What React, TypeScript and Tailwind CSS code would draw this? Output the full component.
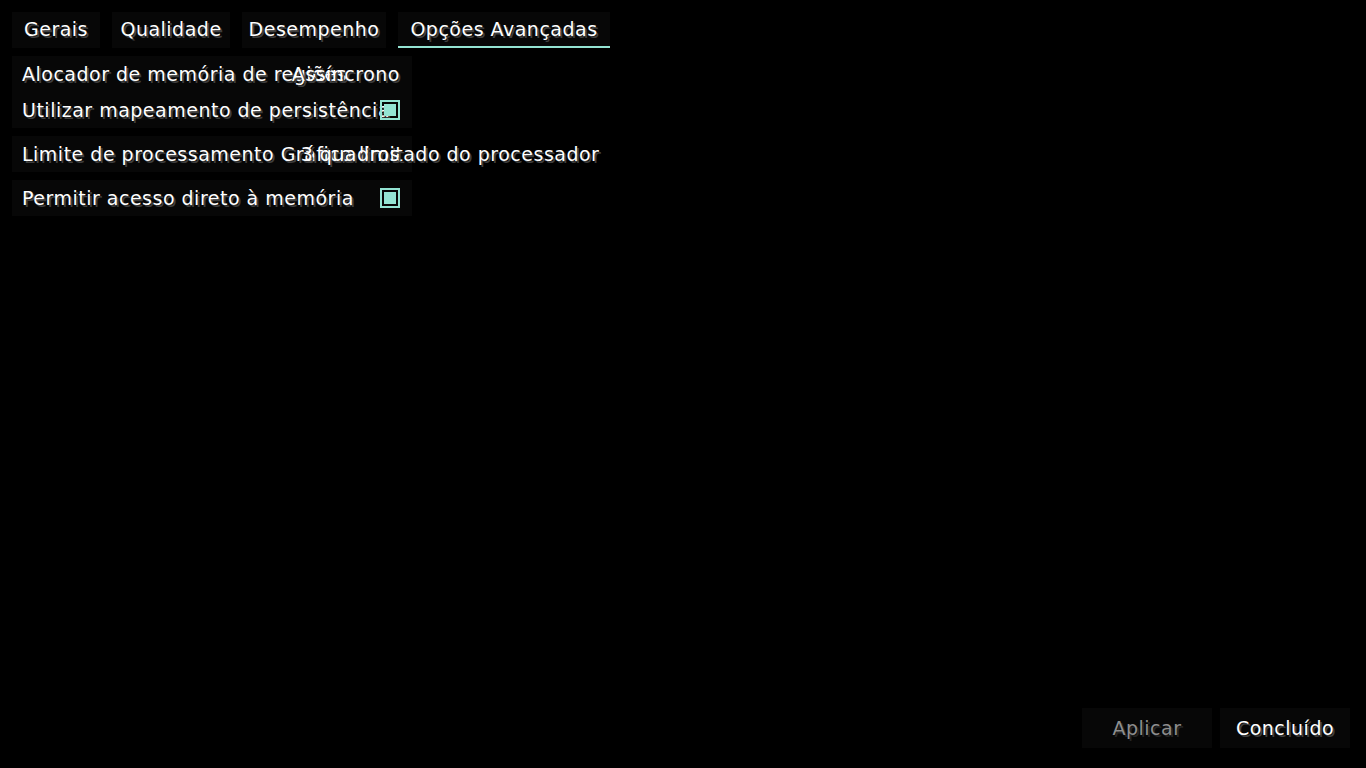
import React from "react";

const FONT = "font-['DejaVu_Sans',sans-serif] text-[19px] leading-none tracking-[0.5px]";
const SHADOW = "[text-shadow:2px_2px_0_#3f3f3f]";
const PANEL = "bg-[#070707]";

function Tab({ label, w, active }: { label: string; w: string; active?: boolean }) {
  return (
    <div className={`${w} h-[36px] ${PANEL} flex flex-col`}>
      <div className={`flex-1 flex items-center justify-center text-white ${SHADOW}`}>{label}</div>
      <div className={`h-[2px] ${active ? "bg-[#94e4d3]" : "bg-transparent"}`} />
    </div>
  );
}

function Check() {
  return (
    <div className="w-[20px] h-[20px] border-2 border-[#94e4d3] p-[2px] shrink-0">
      <div className="w-full h-full bg-[#94e4d3]" />
    </div>
  );
}

function Row({ label, value, check, extra }: { label: string; value?: string; check?: boolean; extra?: string }) {
  return (
    <div
      className={`w-[400px] h-[36px] ${PANEL} grid grid-cols-[minmax(0,1fr)] items-center pl-[10px] pr-[12px] ${extra ?? ""}`}
    >
      <span className={`[grid-area:1/1] justify-self-start min-w-0 whitespace-nowrap text-white ${SHADOW}`}>
        {label}
      </span>
      {value && (
        <span className={`[grid-area:1/1] justify-self-end whitespace-nowrap text-white ${SHADOW}`}>{value}</span>
      )}
      {check && (
        <div className="[grid-area:1/1] justify-self-end">
          <Check />
        </div>
      )}
    </div>
  );
}

export default function App() {
  return (
    <div className={`w-[1366px] h-[768px] bg-black flex flex-col overflow-hidden ${FONT}`}>
      <div className="flex gap-[12px] pl-[12px] pt-[12px]">
        <Tab label="Gerais" w="w-[88px]" />
        <Tab label="Qualidade" w="w-[118px]" />
        <Tab label="Desempenho" w="w-[144px]" />
        <Tab label="Opções Avançadas" w="w-[212px]" active />
      </div>
      <div className="flex flex-col pl-[12px] pt-[8px]">
        <Row label="Alocador de memória de regiões" value="Assíncrono" />
        <Row label="Utilizar mapeamento de persistência" check />
        <Row label="Limite de processamento Gráfico limitado do processador" value="3 quadros" extra="mt-[8px]" />
        <Row label="Permitir acesso direto à memória" check extra="mt-[8px]" />
      </div>
      <div className="flex-1" />
      <div className="flex justify-end gap-[8px] pr-[16px] pb-[20px]">
        <div
          className={`w-[130px] h-[40px] ${PANEL} flex items-center justify-center text-[#8e8e8e] [text-shadow:2px_2px_0_#242424]`}
        >
          Aplicar
        </div>
        <div className={`w-[130px] h-[40px] ${PANEL} flex items-center justify-center text-white ${SHADOW}`}>
          Concluído
        </div>
      </div>
    </div>
  );
}
